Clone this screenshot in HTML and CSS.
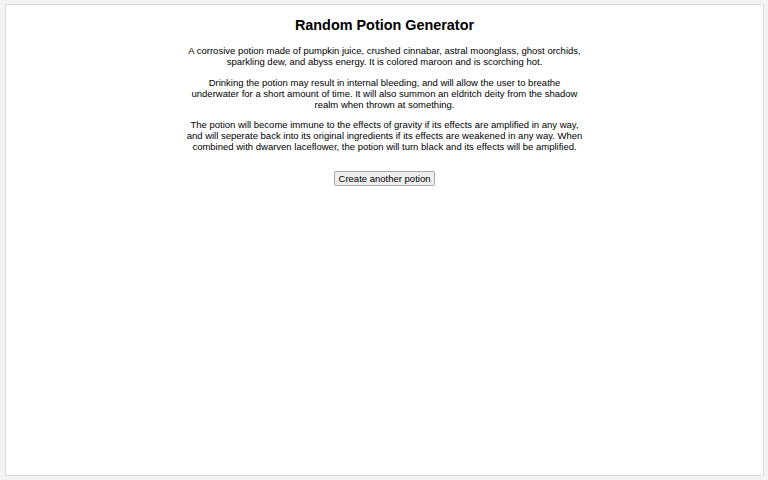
FILE: index.html
```html
<!DOCTYPE html>
<html lang="en">
<head>
  <meta charset="UTF-8">
  <meta name="viewport" content="width=device-width, initial-scale=1.0">
  <title>Random Potion Generator</title>
  <link rel="stylesheet" href="styles.css">
</head>
<body>
  <div class="page">
    <div class="container">
      <h1 class="title">Random Potion Generator</h1>

      <p class="description">
        A corrosive potion made of pumpkin juice, crushed cinnabar, astral moonglass, ghost orchids,
        sparkling dew, and abyss energy. It is colored maroon and is scorching hot.
      </p>
      <p class="description">
        Drinking the potion may result in internal bleeding, and will allow the user to breathe
        underwater for a short amount of time. It will also summon an eldritch deity from the shadow
        realm when thrown at something.
      </p>
      <p class="description">
        The potion will become immune to the effects of gravity if its effects are amplified in any way,
        and will seperate back into its original ingredients if its effects are weakened in any way. When
        combined with dwarven laceflower, the potion will turn black and its effects will be amplified.
      </p>

      <button class="generate" type="button">Create another potion</button>
    </div>
  </div>
</body>
</html>
```

FILE: styles.css
```css
* {
  margin: 0;
  padding: 0;
  box-sizing: border-box;
}

body {
  font-family: 'Liberation Sans', Arial, sans-serif;
  background: #f3f3f3;
  padding: 4px 4px 4px 5px;
  height: 100vh;
  color: #000;
}

.page {
  background: #fff;
  border: 1px solid #dcdcdc;
  height: 100%;
}

.container {
  max-width: 400px;
  margin: 0 auto;
  padding-top: 12px;
  text-align: center;
}

.title {
  font-size: 14.4px;
  font-weight: bold;
  line-height: 17px;
  margin-bottom: 11px;
}

.description {
  font-size: 9.5px;
  line-height: 11px;
  margin-bottom: 9.5px;
}

.generate {
  font-family: inherit;
  font-size: 9.5px;
  line-height: 11px;
  padding: 1px 4px;
  margin-top: 9px;
  background: #efefef;
  border: 1px solid #a6a6a6;
  border-radius: 2px;
  color: #000;
}
```
